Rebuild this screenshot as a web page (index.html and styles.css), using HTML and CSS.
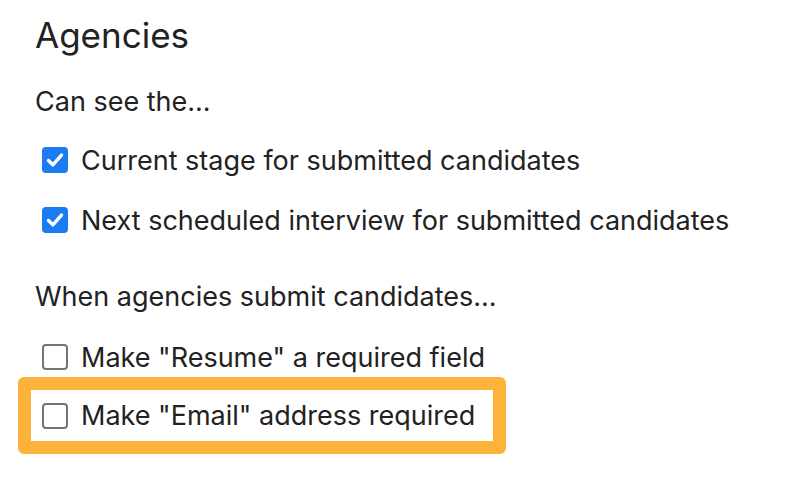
FILE: index.html
```html
<!DOCTYPE html>
<html lang="en">
<head>
  <meta charset="UTF-8">
  <title>Agencies</title>
  <link rel="stylesheet" href="styles.css">
</head>
<body>
  <div class="settings">
    <h2>Agencies</h2>

    <p class="label">Can see the...</p>
    <label class="option">
      <span class="box checked"><svg viewBox="0 0 24 24"><path d="M6 12.5l4 4 8-9" /></svg></span>
      Current stage for submitted candidates
    </label>
    <label class="option">
      <span class="box checked"><svg viewBox="0 0 24 24"><path d="M6 12.5l4 4 8-9" /></svg></span>
      Next scheduled interview for submitted candidates
    </label>

    <p class="label second">When agencies submit candidates...</p>
    <label class="option">
      <span class="box"></span>
      Make "Resume" a required field
    </label>
    <div class="highlight">
      <label class="option">
        <span class="box"></span>
        Make "Email" address required
      </label>
    </div>
  </div>
</body>
</html>
```

FILE: styles.css
```css
body {
  font-family: Inter, "Noto Sans", sans-serif;
  color: #222;
  background: #fff;
  margin: 0;
  padding: 0;
}

.settings {
  padding: 14px 0 0 35px;
}

h2 {
  font-size: 35px;
  font-weight: 400;
  margin: 0;
  line-height: 42px;
}

.label {
  font-size: 27px;
  margin: 30px 0 22px;
  line-height: 32px;
}

.label.second {
  margin-top: 41px;
  margin-bottom: 24px;
}

.option {
  display: flex;
  align-items: center;
  gap: 13px;
  font-size: 27px;
  height: 40px;
  padding-left: 7px;
}

.option + .option {
  margin-top: 20px;
}

.box {
  width: 26px;
  height: 26px;
  box-sizing: border-box;
  border: 2px solid #747474;
  border-radius: 4px;
  flex-shrink: 0;
}

.box.checked {
  background: #1a7bf2;
  border: none;
}

.box svg {
  width: 26px;
  height: 26px;
  fill: none;
  stroke: #fff;
  stroke-width: 3.2;
  stroke-linecap: round;
  stroke-linejoin: round;
}

.highlight {
  border: 13px solid #fdb23a;
  border-radius: 6px;
  width: 462px;
  margin-left: -17px;
}

.highlight .option {
  height: 51px;
  padding-left: 11px;
}
```
